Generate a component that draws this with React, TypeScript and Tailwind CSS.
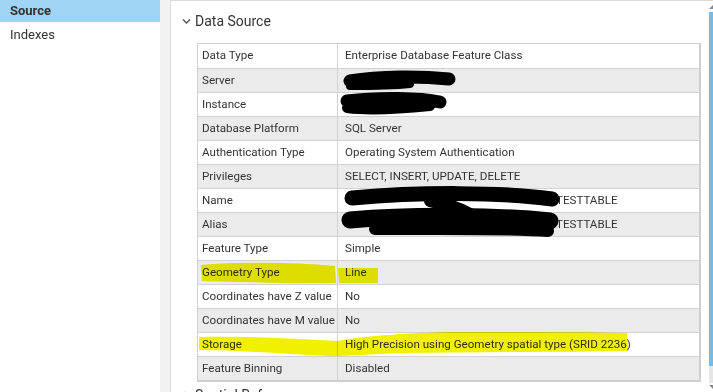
import React from "react";

const rows: { label: string; value: React.ReactNode }[] = [
  { label: "Data Type", value: "Enterprise Database Feature Class" },
  { label: "Server", value: "" },
  { label: "Instance", value: "" },
  { label: "Database Platform", value: "SQL Server" },
  { label: "Authentication Type", value: "Operating System Authentication" },
  { label: "Privileges", value: "SELECT, INSERT, UPDATE, DELETE" },
  {
    label: "Name",
    value: (
      <>
        <span className="inline-block w-[211px]" />
        TESTTABLE
      </>
    ),
  },
  {
    label: "Alias",
    value: (
      <>
        <span className="inline-block w-[211px]" />
        TESTTABLE
      </>
    ),
  },
  { label: "Feature Type", value: "Simple" },
  { label: "Geometry Type", value: "Line" },
  { label: "Coordinates have Z value", value: "No" },
  { label: "Coordinates have M value", value: "No" },
  { label: "Storage", value: "High Precision using Geometry spatial type (SRID 2236)" },
  { label: "Feature Binning", value: "Disabled" },
];

function Chevron({ down }: { down: boolean }) {
  return (
    <svg width="9" height="9" viewBox="0 0 9 9" className="shrink-0">
      {down ? (
        <path d="M1 2.5 L4.5 6 L8 2.5" fill="none" stroke="#555" strokeWidth="1.4" />
      ) : (
        <path d="M2.5 1 L6 4.5 L2.5 8" fill="none" stroke="#555" strokeWidth="1.4" />
      )}
    </svg>
  );
}

export default function App() {
  return (
    <div
      className="relative flex h-[392px] w-[713px] overflow-hidden bg-white text-[#333]"
      style={{ fontFamily: 'Roboto, "Open Sans", sans-serif' }}
    >
      {/* Left nav */}
      <div className="flex w-[160px] shrink-0 flex-col bg-white text-[13px]">
        <div className="flex h-[22px] shrink-0 items-center bg-[#9fd4f4] pl-[10px] font-bold text-[#333]">Source</div>
        <div className="flex h-[25px] shrink-0 items-center pl-[10px] text-[#333]">Indexes</div>
      </div>
      {/* gutter */}
      <div className="w-[10px] shrink-0 bg-[#f2f2f2]" />
      {/* content panel */}
      <div className="flex min-w-0 flex-1 border-l border-t border-[#d9d9d9] bg-white">
        <div className="flex min-w-0 flex-1 flex-col pl-[11px]">
          <div className="flex h-[42px] shrink-0 items-center gap-[4px] pb-[1px]">
            <Chevron down />
            <span className="text-[14px] text-[#333]">Data Source</span>
          </div>
          <div className="ml-[15px] w-[504px] shrink-0 border-b-2 border-l border-r-2 border-t border-[#cfcfcf] text-[11.6px]">
            {rows.map((r, i) => (
              <div
                key={r.label}
                className={`grid h-[24px] grid-cols-[140px_1fr] ${i > 0 ? "border-t border-[#d2d2d2]" : ""} ${
                  i % 2 === 1 ? "bg-[#ebebeb]" : "bg-white"
                }`}
              >
                <div className="flex items-center border-r border-[#d2d2d2] pl-[4px] whitespace-nowrap">{r.label}</div>
                <div className="flex items-center pl-[7px] whitespace-nowrap">{r.value}</div>
              </div>
            ))}
          </div>
          <div className="mt-[2px] flex h-[22px] shrink-0 items-center gap-[4px]">
            <Chevron down={false} />
            <span className="text-[14px] text-[#333]">Spatial Reference</span>
          </div>
        </div>
        {/* scrollbar */}
        <div className="flex w-[4px] shrink-0 flex-col pt-[2px]">
          <svg width="4" height="8" viewBox="0 0 4 8" className="shrink-0">
            <path d="M4 2 L4 6 L0 6 Z" fill="#888" />
          </svg>
          <div className="mt-[1px] h-[354px] shrink-0 bg-[#79b9e8]" />
          <div className="h-[17px] shrink-0 bg-[#e6e6e6]" />
          <svg width="4" height="8" viewBox="0 0 4 8" className="shrink-0">
            <path d="M0 2 L4 2 L4 6 Z" fill="#888" />
          </svg>
        </div>
      </div>

      {/* annotations overlay: redactions and highlighter marks */}
      <svg className="pointer-events-none absolute left-0 top-0" width="713" height="392" viewBox="0 0 713 392">
        {/* highlighter */}
        <g fill="#f0f000" style={{ mixBlendMode: "multiply" }}>
          <path d="M201 265 C 240 262, 290 262, 335 266 L 336 283 C 300 284, 250 282, 202 281 Z" />
          <path d="M338 268 L 378 268 L 378 283 L 339 283 Z" />
          <path d="M199 337 C 250 336, 300 339, 338 341 C 360 336, 420 332, 460 332 C 520 332, 580 332, 627 333 L 628 351 C 560 352, 480 352, 400 353 C 370 354, 350 356, 330 356 C 280 354, 240 350, 199 350 Z" />
        </g>
        {/* redactions */}
        <g fill="none" stroke="#000" strokeLinecap="round" strokeLinejoin="round">
          <path d="M350 81 C 380 76, 420 76, 449 79" strokeWidth="13" />
          <path d="M350 86 C 370 86, 390 86, 410 84" strokeWidth="8" />
          <path d="M347 101 C 380 97, 420 98, 440 102" strokeWidth="13" />
          <path d="M347 108 C 370 111, 400 109, 430 106" strokeWidth="10" />
          <path d="M352 198 C 420 192, 500 192, 552 199" strokeWidth="15" />
          <path d="M430 201 C 450 205, 460 208, 470 214" strokeWidth="12" />
          <path d="M350 220 C 420 214, 500 216, 550 221" strokeWidth="17" />
          <path d="M375 229 C 450 229, 510 228, 548 231" strokeWidth="12" />
        </g>
      </svg>
    </div>
  );
}
